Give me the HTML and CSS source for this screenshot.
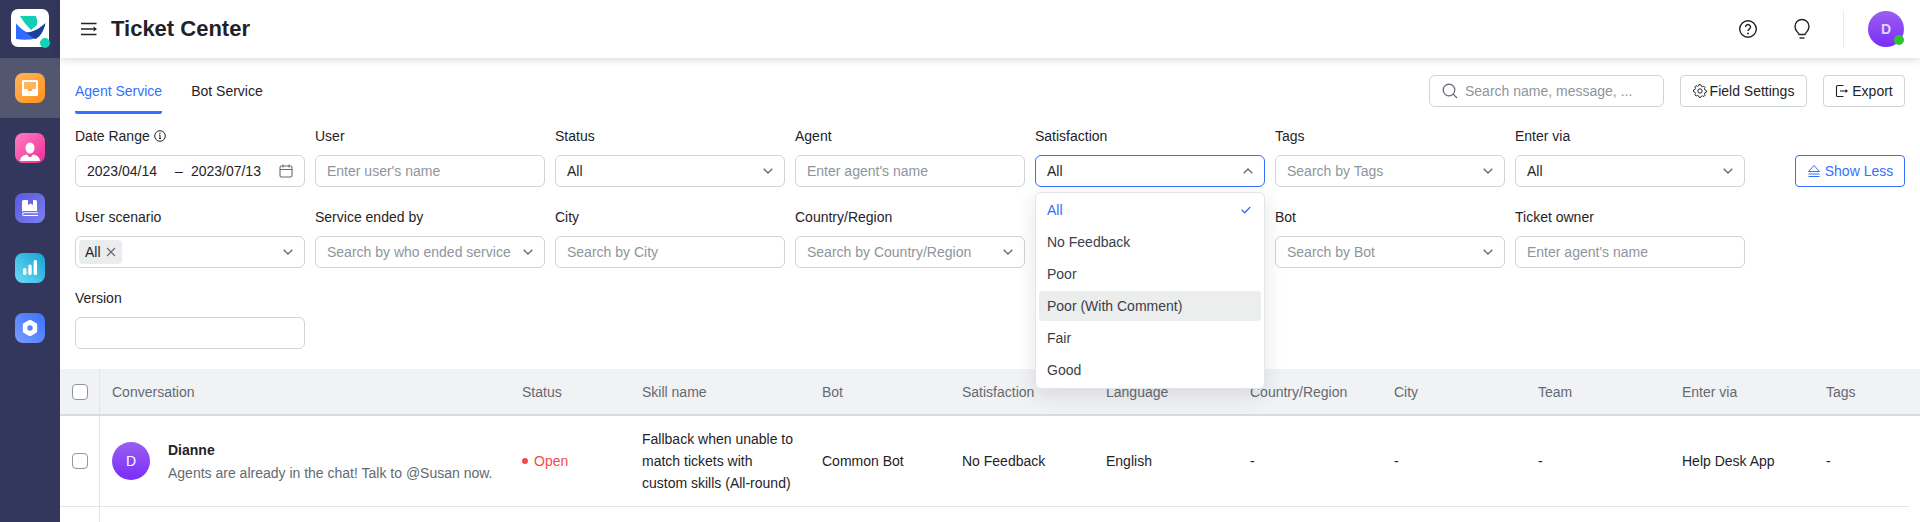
FILE: index.html
```html
<!DOCTYPE html>
<html lang="en">
<head>
<meta charset="utf-8">
<title>Ticket Center</title>
<link rel="stylesheet" href="styles.css">
</head>
<body>
<div class="app">
  <nav class="sidebar">
    <div class="logo-wrap">
      <div class="logo">
        <svg width="38" height="38" viewBox="0 0 38 38">
          <path d="M9 7H25C26 10 26.500 13 26 16L20 21C16 17 12 12 9 7Z" fill="#14cdb4"/>
          <path d="M5 14.500C9 19 14 23 19 24.500L24.500 29.500C19 31 12 31 5 30Z" fill="#2f6bff"/>
          <path d="M15 23.500C22 23.500 29 19 34.500 14C33 22 29 28 24.500 30C21 28 18 26 15 23.500Z" fill="#1c3f9f"/>
        </svg>
        <span class="logo-dot"></span>
      </div>
    </div>
    <a class="nav-item active"><span class="nav-icon orange">
      <svg width="18" height="18" viewBox="0 0 18 18"><path fill-rule="evenodd" d="M2.500 1h13A1.500 1.500 0 0 1 17 2.500v13a1.500 1.500 0 0 1-1.500 1.500h-13A1.500 1.500 0 0 1 1 15.500v-13A1.500 1.500 0 0 1 2.500 1ZM3 3v7h3.500l1 2h3l1-2H15V3H3Z" fill="#fff"/><rect x="3" y="3" width="12" height="7" fill="#ffb45e"/></svg>
    </span></a>
    <a class="nav-item"><span class="nav-icon pink">
      <svg width="22" height="22" viewBox="0 0 22 22"><ellipse cx="11" cy="7" rx="4.500" ry="5.500" fill="#fff"/><path d="M1 20c.5-4 3-6 7-6.500l2 2.500h2l2-2.500c4 .5 6.500 2.500 7 6.500H1Z" fill="#fff"/></svg>
    </span></a>
    <a class="nav-item"><span class="nav-icon indigo">
      <svg width="18" height="18" viewBox="0 0 18 18"><path d="M1 2.500A1.500 1.500 0 0 1 2.500 1H7v5l2.500-1.500L12 6V1h2.500A1.500 1.500 0 0 1 16 2.500V12H3a3 3 0 0 0-2 .8V2.500Z" fill="#fff"/><path d="M3 13.200h14v1H3a.8.800 0 0 0 0 1.800h14v1H3a1.900 1.900 0 0 1 0-3.800Z" fill="#fff"/></svg>
    </span></a>
    <a class="nav-item"><span class="nav-icon cyan">
      <svg width="18" height="18" viewBox="0 0 18 18"><rect x="2" y="9" width="3.400" height="7" rx="1.500" fill="#fff"/><rect x="7.300" y="5.500" width="3.400" height="10.500" rx="1.500" fill="#fff"/><rect x="12.600" y="1" width="3.400" height="15" rx="1.500" fill="#fff"/></svg>
    </span></a>
    <a class="nav-item"><span class="nav-icon blue">
      <svg width="18" height="18" viewBox="0 0 18 18"><polygon points="9,2.500 14.600,5.750 14.600,12.250 9,15.500 3.400,12.250 3.400,5.750" fill="#fff" stroke="#fff" stroke-width="3.200" stroke-linejoin="round"/><circle cx="9" cy="9" r="2.700" fill="#5a86fd"/></svg>
    </span></a>
  </nav>

  <main class="main">
    <header class="topbar">
      <svg class="menu-icon" width="18" height="16" viewBox="0 0 18 16"><path d="M1 2.500h15.500M1 8h12.500M1 13.500h15.500" stroke="#1f2329" stroke-width="1.600" fill="none"/><path d="M13.500 5.500 17 8l-3.500 2.500Z" fill="#1f2329"/></svg>
      <h1 class="title">Ticket Center</h1>
      <div class="top-actions">
        <svg class="top-icon" width="20" height="20" viewBox="0 0 20 20"><circle cx="10" cy="10" r="8.300" fill="none" stroke="#1f2329" stroke-width="1.400"/><path d="M7.500 8a2.500 2.500 0 1 1 3.800 2.100c-.9.600-1.300 1-1.300 2" fill="none" stroke="#1f2329" stroke-width="1.400"/><circle cx="10" cy="14.500" r=".9" fill="#1f2329"/></svg>
        <svg class="top-icon" width="18" height="22" viewBox="0 0 18 22"><path d="M6 16.500C5.500 14.500 2 13 2 8.500a7 7 0 0 1 14 0c0 4.500-3.500 6-4 8H6Z" fill="none" stroke="#1f2329" stroke-width="1.400" stroke-linejoin="round"/><path d="M6.500 20h5" stroke="#1f2329" stroke-width="1.400"/></svg>
        <span class="top-divider"></span>
        <span class="avatar avatar-top">D<span class="online"></span></span>
      </div>
    </header>

    <section class="toolbar">
      <div class="tabs">
        <a class="tab active">Agent Service</a>
        <a class="tab">Bot Service</a>
      </div>
      <div class="tool-actions">
        <div class="search">
          <svg width="16" height="16" viewBox="0 0 16 16"><circle cx="7" cy="7" r="5.800" fill="none" stroke="#5f6670" stroke-width="1.200"/><path d="m11.200 11.200 3.800 3.800" stroke="#5f6670" stroke-width="1.200"/></svg>
          <span class="placeholder">Search name, message, ...</span>
        </div>
        <button class="btn btn-field">
          <svg width="14" height="14" viewBox="0 0 14 14"><path d="M7 1l1 .1.500 1.500 1.100.5 1.400-.7 1.300 1.400-.7 1.400.4 1.100 1.500.5v2l-1.500.5-.4 1.100.7 1.400-1.300 1.300-1.400-.7-1.100.5L8 13.900H6l-.5-1.500-1.100-.5-1.400.7-1.300-1.300.7-1.400-.5-1.100L.4 8.300v-2l1.500-.5.500-1.100L1.700 3.300 3 1.900l1.400.7 1.100-.5L6 .6Z" transform="translate(.2 -.2) scale(.97)" fill="none" stroke="#1f2329" stroke-width="1"/><circle cx="7" cy="7" r="2.200" fill="none" stroke="#1f2329" stroke-width="1"/></svg>
          Field Settings
        </button>
        <button class="btn btn-export">
          <svg width="14" height="14" viewBox="0 0 14 14"><path d="M8.500 1.500h-6A1 1 0 0 0 1.500 2.500v9a1 1 0 0 0 1 1h6" fill="none" stroke="#1f2329" stroke-width="1.100"/><path d="M5 7h7" stroke="#1f2329" stroke-width="1.100"/><path d="M10.500 5 13 7l-2.500 2Z" fill="#1f2329"/></svg>
          Export
        </button>
      </div>
    </section>

    <section class="filters">
      <div class="field">
        <label class="label">Date Range <svg width="12" height="12" viewBox="0 0 12 12"><circle cx="6" cy="6" r="5.300" fill="none" stroke="#1f2329"/><path d="M6 5v3.500M5 8.500h2M5 5h1" stroke="#1f2329"/><circle cx="6" cy="3.300" r=".7" fill="#1f2329"/></svg></label>
        <div class="control date"><span>2023/04/14</span><span class="dash">–</span><span>2023/07/13</span>
          <svg class="cal" width="14" height="14" viewBox="0 0 14 14"><rect x="1" y="2" width="12" height="11" rx="1.500" fill="none" stroke="#646a73" stroke-width="1.100"/><path d="M1 5.500h12M4 .5v3M10 .5v3" stroke="#646a73" stroke-width="1.100"/></svg>
        </div>
      </div>
      <div class="field"><label class="label">User</label><div class="control"><span class="placeholder">Enter user's name</span></div></div>
      <div class="field"><label class="label">Status</label><div class="control select"><span>All</span><svg class="chev" width="10" height="6" viewBox="0 0 10 6"><path d="m.7.700 4.300 4.300L9.300.7" fill="none" stroke="#646a73" stroke-width="1.300"/></svg></div></div>
      <div class="field"><label class="label">Agent</label><div class="control"><span class="placeholder">Enter agent's name</span></div></div>
      <div class="field anchor"><label class="label">Satisfaction</label><div class="control select focus"><span>All</span><svg class="chev" width="10" height="6" viewBox="0 0 10 6"><path d="M.7 5.300 5 1l4.300 4.300" fill="none" stroke="#646a73" stroke-width="1.300"/></svg></div>
        <ul class="dropdown">
          <li class="option selected">All<svg width="10" height="8" viewBox="0 0 10 8"><path d="M.7 3.800 3.700 6.800 9.300 1" fill="none" stroke="#3370ff" stroke-width="1.300"/></svg></li>
          <li class="option">No Feedback</li>
          <li class="option">Poor</li>
          <li class="option hover">Poor (With Comment)</li>
          <li class="option">Fair</li>
          <li class="option">Good</li>
        </ul>
      </div>
      <div class="field"><label class="label">Tags</label><div class="control select"><span class="placeholder">Search by Tags</span><svg class="chev" width="10" height="6" viewBox="0 0 10 6"><path d="m.7.700 4.300 4.300L9.300.7" fill="none" stroke="#646a73" stroke-width="1.300"/></svg></div></div>
      <div class="field"><label class="label">Enter via</label><div class="control select"><span>All</span><svg class="chev" width="10" height="6" viewBox="0 0 10 6"><path d="m.7.700 4.300 4.300L9.300.7" fill="none" stroke="#646a73" stroke-width="1.300"/></svg></div></div>
      <button class="btn btn-primary show-less">
        <svg width="14" height="14" viewBox="0 0 14 14"><path d="M1.500 7.500 7 1.500l5.500 6H1.500ZM1.500 10h11M1.500 12.500h11" fill="none" stroke="#3370ff" stroke-width="1"/></svg>
        Show Less
      </button>

      <div class="field"><label class="label">User scenario</label><div class="control select tagged"><span class="tag">All <svg width="10" height="10" viewBox="0 0 10 10"><path d="m1 1 8 8M9 1 1 9" stroke="#646a73" stroke-width="1.200"/></svg></span><svg class="chev" width="10" height="6" viewBox="0 0 10 6"><path d="m.7.700 4.300 4.300L9.300.7" fill="none" stroke="#646a73" stroke-width="1.300"/></svg></div></div>
      <div class="field"><label class="label">Service ended by</label><div class="control select"><span class="placeholder">Search by who ended service</span><svg class="chev" width="10" height="6" viewBox="0 0 10 6"><path d="m.7.700 4.300 4.300L9.300.7" fill="none" stroke="#646a73" stroke-width="1.300"/></svg></div></div>
      <div class="field"><label class="label">City</label><div class="control"><span class="placeholder">Search by City</span></div></div>
      <div class="field"><label class="label">Country/Region</label><div class="control select"><span class="placeholder">Search by Country/Region</span><svg class="chev" width="10" height="6" viewBox="0 0 10 6"><path d="m.7.700 4.300 4.300L9.300.7" fill="none" stroke="#646a73" stroke-width="1.300"/></svg></div></div>
      <div class="field"></div>
      <div class="field"><label class="label">Bot</label><div class="control select"><span class="placeholder">Search by Bot</span><svg class="chev" width="10" height="6" viewBox="0 0 10 6"><path d="m.7.700 4.300 4.300L9.300.7" fill="none" stroke="#646a73" stroke-width="1.300"/></svg></div></div>
      <div class="field"><label class="label">Ticket owner</label><div class="control"><span class="placeholder">Enter agent's name</span></div></div>
      <div class="grid-spacer"></div>

      <div class="field"><label class="label">Version</label><div class="control"></div></div>
    </section>

    <section class="table">
      <div class="row head">
        <div class="cell check"><span class="checkbox"></span></div>
        <div class="cell">Conversation</div>
        <div class="cell">Status</div>
        <div class="cell">Skill name</div>
        <div class="cell">Bot</div>
        <div class="cell">Satisfaction</div>
        <div class="cell">Language</div>
        <div class="cell">Country/Region</div>
        <div class="cell">City</div>
        <div class="cell">Team</div>
        <div class="cell">Enter via</div>
        <div class="cell">Tags</div>
      </div>
      <div class="row body">
        <div class="cell check"><span class="checkbox"></span></div>
        <div class="cell convo">
          <span class="avatar">D</span>
          <div class="convo-text"><strong class="name">Dianne</strong><span class="preview">Agents are already in the chat! Talk to @Susan now.</span></div>
        </div>
        <div class="cell status-open"><span class="dot"></span>Open</div>
        <div class="cell skill">Fallback when unable to match tickets with custom skills (All-round)</div>
        <div class="cell">Common Bot</div>
        <div class="cell">No Feedback</div>
        <div class="cell">English</div>
        <div class="cell">-</div>
        <div class="cell">-</div>
        <div class="cell">-</div>
        <div class="cell">Help Desk App</div>
        <div class="cell">-</div>
      </div>
      <div class="row tail"><div class="cell check"></div></div>
    </section>
  </main>
</div>
</body>
</html>
```
FILE: styles.css
```css
* { box-sizing: border-box; }
html, body { margin: 0; height: 100%; overflow: hidden; }
body { font-family: "Liberation Sans", Arial, sans-serif; font-size: 14px; color: #1f2329; background: #fff; }
.app { display: flex; height: 522px; }

.sidebar { width: 60px; flex: none; background: #33375c; }
.logo-wrap { height: 58px; display: flex; align-items: flex-start; justify-content: center; padding-top: 9px; }
.logo { position: relative; width: 38px; height: 38px; background: #fff; border-radius: 7px; }
.logo svg { display: block; }
.logo-dot { position: absolute; right: -1px; bottom: -1px; width: 10px; height: 10px; border-radius: 50%; background: #11d3b5; }
.nav-item { display: flex; height: 60px; align-items: center; justify-content: center; }
.nav-item.active { background: #52566f; }
.nav-icon { width: 30px; height: 30px; border-radius: 8px; display: flex; align-items: center; justify-content: center; overflow: hidden; }
.orange { background: linear-gradient(135deg, #ffb45e, #ff9219); }
.pink { background: linear-gradient(135deg, #ff7fc0, #ee2c97); align-items: flex-end; }
.indigo { background: linear-gradient(135deg, #5b57e0, #7a80ee); }
.cyan { background: linear-gradient(45deg, #6fdcf7, #12a2d3); }
.blue { background: linear-gradient(45deg, #7a9dfb, #3a72ff); }

.main { flex: 1; min-width: 0; display: flex; flex-direction: column; }
.topbar { height: 58px; flex: none; display: flex; align-items: center; padding: 0 16px 0 20px; background: #fff; box-shadow: 0 2px 8px rgba(31, 35, 41, .16); position: relative; z-index: 2; }
.menu-icon { flex: none; }
.title { margin: 0 0 0 13px; font-size: 22px; line-height: 28px; font-weight: 700; color: #1f2329; }
.top-actions { margin-left: auto; display: flex; align-items: center; }
.top-icon { display: block; }
.top-icon + .top-icon { margin-left: 35px; }
.top-divider { width: 1px; height: 36px; background: #e8e9eb; margin: 0 24px 0 32px; }
.avatar { position: relative; width: 38px; height: 38px; border-radius: 50%; background: linear-gradient(180deg, #9a5ff0, #7a2dfb); color: #fff; display: flex; align-items: center; justify-content: center; font-size: 14px; flex: none; }
.avatar-top { width: 36px; height: 36px; color: #e3d4ff; font-weight: 700; }
.online { position: absolute; right: 0; bottom: 2px; width: 10px; height: 10px; border-radius: 50%; background: #2fc32f; }

.toolbar { display: flex; justify-content: space-between; height: 56px; padding: 0 15px; flex: none; }
.tabs { display: flex; gap: 29px; height: 56px; }
.tab { height: 56px; padding-top: 24px; line-height: 19px; font-size: 14px; border-bottom: 3px solid transparent; color: #1f2329; }
.tab.active { color: #3370ff; border-bottom-color: #3370ff; border-radius: 0 0 2px 2px; }
.tool-actions { display: flex; padding-top: 17px; gap: 16px; height: 49px; }
.search { width: 235px; height: 32px; border: 1px solid #d0d3d6; border-radius: 6px; display: flex; align-items: center; gap: 7px; padding: 0 12px; }
.placeholder { color: #8f959e; white-space: nowrap; }
.btn { height: 32px; padding: 0; background: #fff; border: 1px solid #d0d3d6; border-radius: 4px; font: inherit; color: #1f2329; display: flex; align-items: center; justify-content: center; gap: 3px; white-space: nowrap; }
.btn-field { width: 127px; }
.btn-export { width: 82px; }
.btn-primary { color: #3370ff; border-color: #3370ff; }

.filters { display: grid; grid-template-columns: repeat(7, 230px) 150px; column-gap: 10px; row-gap: 0; padding: 12px 15px 0; height: 255px; flex: none; align-content: start; }
.field { height: 81px; position: relative; }
.label { display: flex; align-items: center; gap: 4px; height: 20px; line-height: 20px; margin-bottom: 9px; }
.control { height: 32px; border: 1px solid #d0d3d6; border-radius: 6px; padding: 0 11px; display: flex; align-items: center; background: #fff; }
.control.select { justify-content: space-between; }
.control.focus { border-color: #3370ff; }
.control.tagged { padding-left: 3px; }
.chev { flex: none; }
.date .dash { margin: 0 8px 0 18px; }
.cal { margin-left: auto; }
.tag { display: inline-flex; align-items: center; gap: 5px; height: 24px; padding: 0 6px; border-radius: 4px; background: #ebecee; }
.show-less { margin-top: 29px; justify-self: end; width: 110px; gap: 4px; }

.dropdown { position: absolute; z-index: 5; top: 66px; left: 0; width: 230px; height: 197px; margin: 0; padding: 2px 3px; list-style: none; background: #fff; border: 1px solid #e4e5e7; border-radius: 6px; box-shadow: 0 6px 20px rgba(31, 35, 41, .12); display: flex; flex-direction: column; gap: 2px; }
.option { height: 30px; flex: none; display: flex; align-items: center; justify-content: space-between; padding: 0 10px 0 8px; border-radius: 4px; color: #3b4048; }
.option.selected { color: #3370ff; }
.option.hover { background: #eceded; }

.table { flex: 1; min-height: 0; }
.row { display: grid; grid-template-columns: 40px 410px 120px 180px 140px 144px 144px 144px 144px 144px 144px 106px; }
.row .cell { padding: 0 12px; display: flex; align-items: center; min-width: 0; }
.row .check { padding: 0 0 0 12px; border-right: 1px solid #e4e5e7; }
.head { height: 47px; background: #f1f2f4; border-bottom: 2px solid #d9dadc; color: #646a73; }
.body { height: 91px; border-bottom: 1px solid #e4e5e7; margin-right: 11px; grid-template-columns: 40px 410px 120px 180px 140px 144px 144px 144px 144px 144px 144px 95px; }
.tail { height: 20px; }
.checkbox { width: 16px; height: 16px; border: 1px solid #8f959e; border-radius: 4px; background: #fff; display: block; }
.convo { gap: 18px; }
.convo-text { display: flex; flex-direction: column; gap: 5px; padding-top: 1px; white-space: nowrap; }
.name { font-weight: 700; font-size: 14px; line-height: 18px; }
.preview { color: #646a73; line-height: 18px; }
.status-open { color: #f54a45; gap: 6px; }
.dot { width: 6px; height: 6px; border-radius: 50%; background: #f54a45; }
.skill { line-height: 22px; }
```
